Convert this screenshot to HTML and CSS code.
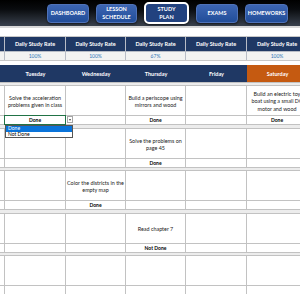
FILE: index.html
```html
<!DOCTYPE html>
<html lang="en">

<head>
  <meta charset="UTF-8">
  <meta name="viewport" content="width=device-width, initial-scale=1.0">
  <title>Study Plan</title>
  <link rel="stylesheet" href="styles.css">
</head>

<body>

  <div class="topbar">
    <a class="btn">DASHBOARD</a>
    <a class="btn">LESSON<br>SCHEDULE</a>
    <a class="btn active">STUDY<br>PLAN</a>
    <a class="btn">EXAMS</a>
    <a class="btn">HOMEWORKS</a>
  </div>

  <div class="sheet">

    <div class="rates">
      <div class="rate-head"></div>
      <div class="rate-head">Daily Study Rate</div>
      <div class="rate-head">Daily Study Rate</div>
      <div class="rate-head">Daily Study Rate</div>
      <div class="rate-head">Daily Study Rate</div>
      <div class="rate-head">Daily Study Rate</div>
      <div class="rate"></div>
      <div class="rate">100%</div>
      <div class="rate">100%</div>
      <div class="rate">67%</div>
      <div class="rate"></div>
      <div class="rate">100%</div>
    </div>

    <div class="plan">
      <div class="day"></div>
      <div class="day">Tuesday</div>
      <div class="day">Wednesday</div>
      <div class="day">Thursday</div>
      <div class="day">Friday</div>
      <div class="day weekend">Saturday</div>

      <!-- week 1 -->
      <div class="band"></div>
      <div class="task"></div>
      <div class="task">Solve the acceleration problems given in class</div>
      <div class="task"></div>
      <div class="task">Build a periscope using mirrors and wood</div>
      <div class="task"></div>
      <div class="task">Build an electric toy<br>boat using a small DC motor and wood</div>
      <div class="status"></div>
      <div class="status selected">Done
        <span class="arrow"></span>
        <ul class="dropdown">
          <li class="hover">Done</li>
          <li>Not Done</li>
        </ul>
      </div>
      <div class="status"></div>
      <div class="status">Done</div>
      <div class="status"></div>
      <div class="status">Done</div>

      <!-- week 2 -->
      <div class="band"></div>
      <div class="task"></div>
      <div class="task"></div>
      <div class="task"></div>
      <div class="task">Solve the problems on page 45</div>
      <div class="task"></div>
      <div class="task"></div>
      <div class="status"></div>
      <div class="status"></div>
      <div class="status"></div>
      <div class="status">Done</div>
      <div class="status"></div>
      <div class="status"></div>

      <!-- week 3 -->
      <div class="band"></div>
      <div class="task"></div>
      <div class="task"></div>
      <div class="task">Color the districts in the empty map</div>
      <div class="task"></div>
      <div class="task"></div>
      <div class="task"></div>
      <div class="status"></div>
      <div class="status"></div>
      <div class="status">Done</div>
      <div class="status"></div>
      <div class="status"></div>
      <div class="status"></div>

      <!-- week 4 -->
      <div class="band"></div>
      <div class="task"></div>
      <div class="task"></div>
      <div class="task"></div>
      <div class="task">Read chapter 7</div>
      <div class="task"></div>
      <div class="task"></div>
      <div class="status"></div>
      <div class="status"></div>
      <div class="status"></div>
      <div class="status">Not Done</div>
      <div class="status"></div>
      <div class="status"></div>

      <!-- week 5 -->
      <div class="band"></div>
      <div class="task"></div>
      <div class="task"></div>
      <div class="task"></div>
      <div class="task"></div>
      <div class="task"></div>
      <div class="task"></div>
      <div class="status"></div>
      <div class="status"></div>
      <div class="status"></div>
      <div class="status"></div>
      <div class="status"></div>
      <div class="status"></div>
    </div>

  </div>

</body>

</html>
```

FILE: styles.css
```css
body {
  font-family: Lato, 'Liberation Sans', sans-serif;
  background-color: #fff;
  color: #222;
  margin: 0;
  overflow: hidden;
}

.topbar {
  height: 28px;
  box-sizing: border-box;
  padding-left: 47px;
  display: flex;
  align-items: center;
  gap: 7px;
  background: linear-gradient(#000 0%, #090b0e 35%, #39414d 100%);
  border-bottom: 2px solid #d9d9d9;
}

.btn {
  display: flex;
  align-items: center;
  justify-content: center;
  width: 42px;
  height: 19px;
  box-sizing: border-box;
  border: 1px solid #4f72b8;
  border-radius: 4px;
  background: linear-gradient(#3d66b3, #214d99);
  box-shadow: 0 1px 2px rgba(0, 0, 0, 0.6);
  color: #fff;
  font-size: 5.5px;
  font-weight: bold;
  line-height: 8px;
  text-align: center;
}

.btn:nth-child(2) {
  width: 41px;
}

.btn:nth-child(5) {
  width: 43px;
}

.btn.active {
  width: 45px;
  height: 22px;
  border: 2px solid #fff;
  border-radius: 5px;
  background: #22427f;
}

.sheet {
  overflow: hidden;
  padding-top: 8px;
}

.rates,
.plan {
  display: grid;
  grid-template-columns: 4px 60px 59px 59px 60px 60px;
  gap: 1px;
  width: 307px;
}

.rates {
  grid-template-rows: 14px 8px;
  background-color: #b7bcc6;
  border-top: 1px solid #c8c8c8;
  border-bottom: 1px solid #c8c8c8;
}

.rate-head {
  background-color: #1f3864;
  color: #fff;
  font-size: 5.5px;
  font-weight: bold;
  display: flex;
  align-items: center;
  justify-content: center;
}

.rate {
  background-color: #f2f2f2;
  color: #2e75b6;
  font-size: 5px;
  display: flex;
  align-items: center;
  justify-content: center;
}

.plan {
  margin-top: 4px;
  grid-template-rows: 17px 2px 29px 8px 3px 29px 8px 2px 29px 8px 3px 29px 8px 2px 29px 8px;
  background-color: #c2c2c2;
}

.day {
  background-color: #1f3864;
  color: #fff;
  font-size: 5.5px;
  font-weight: bold;
  display: flex;
  align-items: center;
  justify-content: center;
  margin-right: -1px;
}

.day.weekend {
  background-color: #c55a11;
}

.band {
  grid-column: 1 / -1;
  background-color: #ececec;
}

.task {
  background-color: #fff;
  font-size: 5.4px;
  line-height: 7.5px;
  padding: 3px 0 0;
  display: flex;
  align-items: center;
  justify-content: center;
  text-align: center;
}

.status {
  background-color: #fff;
  color: #000;
  font-size: 5px;
  font-weight: bold;
  display: flex;
  align-items: center;
  justify-content: center;
}

.selected {
  position: relative;
  outline: 1.5px solid #217346;
  z-index: 2;
}

.arrow {
  position: absolute;
  left: 62px;
  top: 0;
  width: 6px;
  height: 7px;
  box-sizing: border-box;
  border: 1px solid #a6a6a6;
  background-color: #fff;
}

.arrow::after {
  content: '';
  position: absolute;
  left: 1px;
  top: 2px;
  border-left: 1.5px solid transparent;
  border-right: 1.5px solid transparent;
  border-top: 2px solid #444;
}

.dropdown {
  position: absolute;
  left: 0;
  top: 9px;
  width: 68px;
  margin: 0;
  padding: 0;
  list-style: none;
  box-sizing: border-box;
  border: 1px solid #555;
  background-color: #fff;
  font-weight: normal;
  font-size: 5px;
  line-height: 5.5px;
  text-align: left;
}

.dropdown li {
  padding-left: 2px;
}

.dropdown .hover {
  background-color: #0a74da;
  color: #fff;
}
```
